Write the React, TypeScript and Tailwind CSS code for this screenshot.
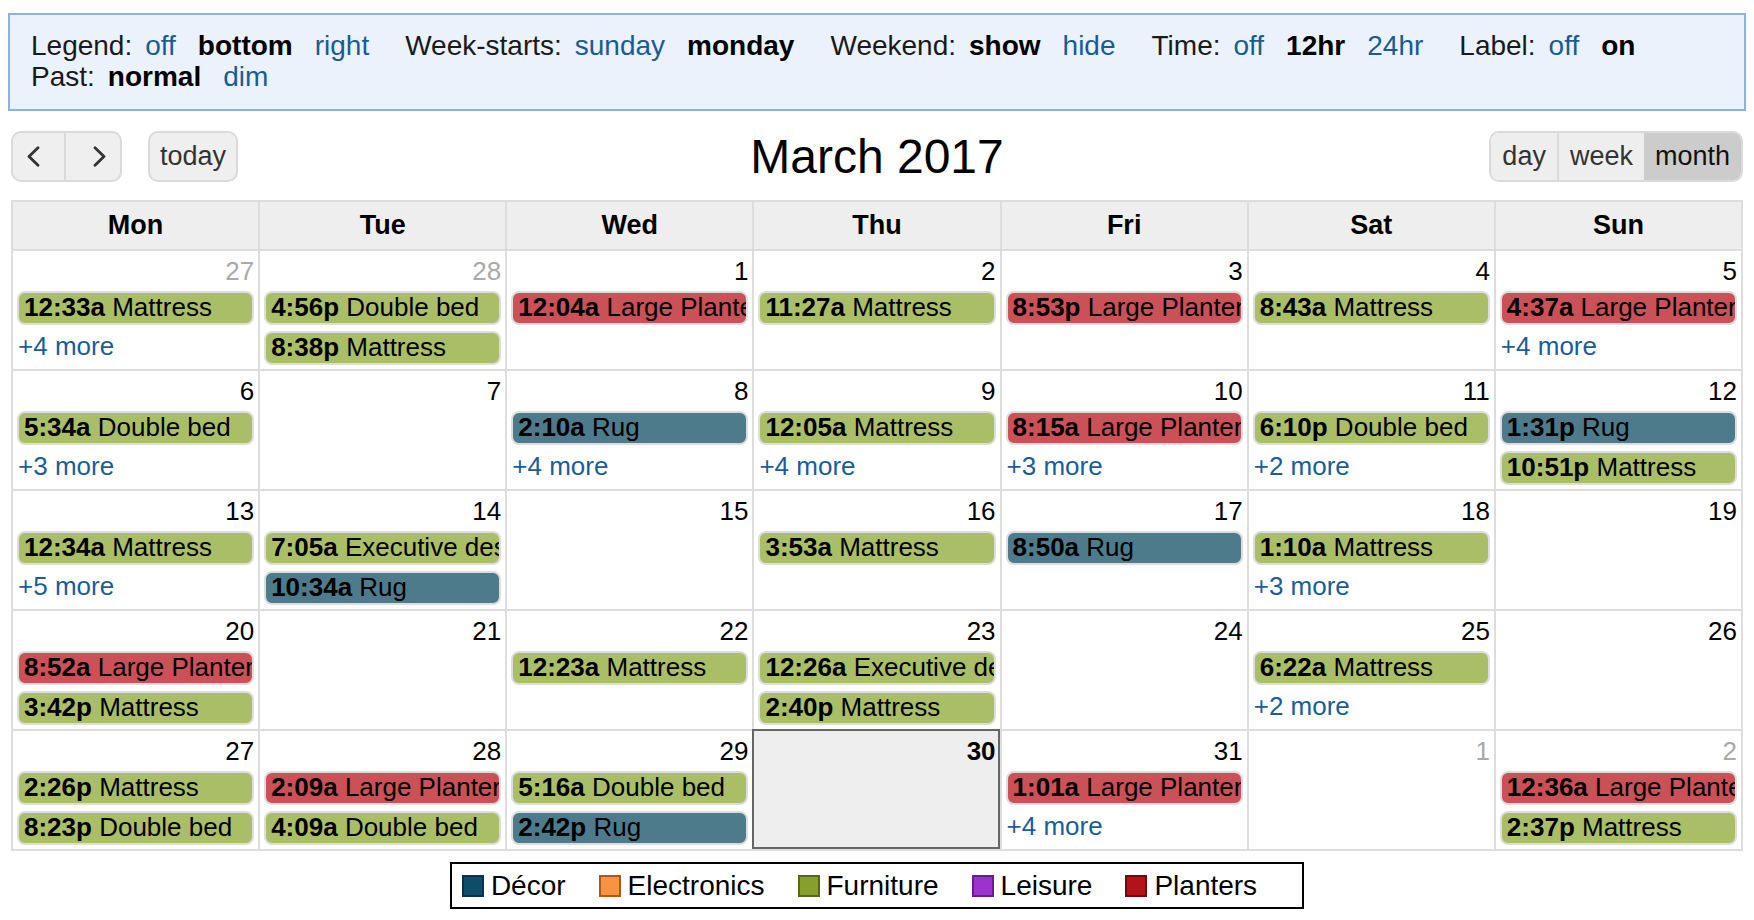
import React from "react";

type Cat = "F" | "P" | "D";
type Ev = [string, string, Cat];
type Day = { n: number; o?: boolean; t?: boolean; e: Ev[]; m?: number };

const evBg: Record<Cat, string> = {
  F: "bg-[#aabe68]",
  P: "bg-[#cb5158]",
  D: "bg-[#4d7b8c]",
};

const weeks: Day[][] = [
  [
    { n: 27, o: true, e: [["12:33a", "Mattress", "F"]], m: 4 },
    { n: 28, o: true, e: [["4:56p", "Double bed", "F"], ["8:38p", "Mattress", "F"]] },
    { n: 1, e: [["12:04a", "Large Planter", "P"]] },
    { n: 2, e: [["11:27a", "Mattress", "F"]] },
    { n: 3, e: [["8:53p", "Large Planter", "P"]] },
    { n: 4, e: [["8:43a", "Mattress", "F"]] },
    { n: 5, e: [["4:37a", "Large Planter", "P"]], m: 4 },
  ],
  [
    { n: 6, e: [["5:34a", "Double bed", "F"]], m: 3 },
    { n: 7, e: [] },
    { n: 8, e: [["2:10a", "Rug", "D"]], m: 4 },
    { n: 9, e: [["12:05a", "Mattress", "F"]], m: 4 },
    { n: 10, e: [["8:15a", "Large Planter", "P"]], m: 3 },
    { n: 11, e: [["6:10p", "Double bed", "F"]], m: 2 },
    { n: 12, e: [["1:31p", "Rug", "D"], ["10:51p", "Mattress", "F"]] },
  ],
  [
    { n: 13, e: [["12:34a", "Mattress", "F"]], m: 5 },
    { n: 14, e: [["7:05a", "Executive desk", "F"], ["10:34a", "Rug", "D"]] },
    { n: 15, e: [] },
    { n: 16, e: [["3:53a", "Mattress", "F"]] },
    { n: 17, e: [["8:50a", "Rug", "D"]] },
    { n: 18, e: [["1:10a", "Mattress", "F"]], m: 3 },
    { n: 19, e: [] },
  ],
  [
    { n: 20, e: [["8:52a", "Large Planter", "P"], ["3:42p", "Mattress", "F"]] },
    { n: 21, e: [] },
    { n: 22, e: [["12:23a", "Mattress", "F"]] },
    { n: 23, e: [["12:26a", "Executive desk", "F"], ["2:40p", "Mattress", "F"]] },
    { n: 24, e: [] },
    { n: 25, e: [["6:22a", "Mattress", "F"]], m: 2 },
    { n: 26, e: [] },
  ],
  [
    { n: 27, e: [["2:26p", "Mattress", "F"], ["8:23p", "Double bed", "F"]] },
    { n: 28, e: [["2:09a", "Large Planter", "P"], ["4:09a", "Double bed", "F"]] },
    { n: 29, e: [["5:16a", "Double bed", "F"], ["2:42p", "Rug", "D"]] },
    { n: 30, t: true, e: [] },
    { n: 31, e: [["1:01a", "Large Planter", "P"]], m: 4 },
    { n: 1, o: true, e: [] },
    { n: 2, o: true, e: [["12:36a", "Large Planter", "P"], ["2:37p", "Mattress", "F"]] },
  ],
];

const options: { label: string; items: [string, boolean][] }[] = [
  { label: "Legend:", items: [["off", false], ["bottom", true], ["right", false]] },
  { label: "Week-starts:", items: [["sunday", false], ["monday", true]] },
  { label: "Weekend:", items: [["show", true], ["hide", false]] },
  { label: "Time:", items: [["off", false], ["12hr", true], ["24hr", false]] },
  { label: "Label:", items: [["off", false], ["on", true]] },
  { label: "Past:", items: [["normal", true], ["dim", false]] },
];

const legend = [
  { name: "Décor", cls: "bg-[#0c4d68] border-[#07344a]" },
  { name: "Electronics", cls: "bg-[#f79444] border-[#b0561c]" },
  { name: "Furniture", cls: "bg-[#86a12b] border-[#556a18]" },
  { name: "Leisure", cls: "bg-[#9c33cf] border-[#6a1a94]" },
  { name: "Planters", cls: "bg-[#b5111a] border-[#6e0a0f]" },
];

const dayNames = ["Mon", "Tue", "Wed", "Thu", "Fri", "Sat", "Sun"];

function Chevron({ dir }: { dir: "left" | "right" }) {
  return (
    <svg width="15" height="21" viewBox="0 0 15 21" fill="none">
      <polyline
        points={dir === "left" ? "12,1.8 3,10.5 12,19.2" : "3,1.8 12,10.5 3,19.2"}
        stroke="#333"
        strokeWidth="2.8"
        strokeLinecap="round"
        strokeLinejoin="round"
      />
    </svg>
  );
}

function Cell({ d }: { d: Day }) {
  return (
    <div className={`relative h-[120px] border-r-2 border-b-2 border-[#dddddd] px-[4px] pt-[5px] ${d.t ? "bg-[#eeeeee]" : ""}`}>
      {d.t && <div className="absolute -left-[2px] -top-[2px] right-0 bottom-0 border-2 border-[#666666] pointer-events-none" />}
      <div className={`text-right text-[26px] leading-[31px] ${d.o ? "text-[#aaaaaa]" : "text-black"} ${d.t ? "font-bold" : ""}`}>
        {d.n}
      </div>
      <div className="mt-[4px] flex flex-col gap-[6px]">
        {d.e.map((ev, i) => (
          <div
            key={i}
            className={`h-[34px] rounded-[8px] border-2 border-[#dddddd] ${evBg[ev[2]]} px-[5px] text-[26px] leading-[28px] text-black whitespace-nowrap overflow-hidden`}
          >
            <span className="font-bold">{ev[0]}</span> {ev[1]}
          </div>
        ))}
        {d.m ? <div className="pl-[1px] text-[26px] leading-[31px] text-[#1c5d96]">+{d.m} more</div> : null}
      </div>
    </div>
  );
}

export default function App() {
  return (
    <div className="min-h-screen bg-white px-[8px] pt-[13px] text-black" style={{ fontFamily: '"Liberation Sans", Arial, Helvetica, sans-serif' }}>
      {/* options */}
      <div className="border-2 border-[#8eb1e2] bg-[#ebf2fb] pl-[21px] pr-[20px] pt-[15px] pb-[17px] text-[28px] leading-[31px] text-[#1a1a1a]">
        <div className="flex flex-wrap gap-x-[36px]">
          {options.map((g) => (
            <div key={g.label} className="flex">
              <span className="mr-[13px]">{g.label}</span>
              <span className="flex gap-[22px]">
                {g.items.map(([t, on]) => (
                  <span key={t} className={on ? "font-bold text-black" : "text-[#1b5b92]"}>
                    {t}
                  </span>
                ))}
              </span>
            </div>
          ))}
        </div>
      </div>

      {/* toolbar */}
      <div className="mx-[3px] mt-[20px] grid h-[51px] grid-cols-3 items-center">
        <div className="flex items-center gap-[26px]">
          <div className="flex h-[51px] rounded-[10px] border-2 border-[#dadada] bg-[#efefef]">
            <div className="flex w-[53px] items-center justify-center border-r-2 border-[#dadada] pr-[10px]">
              <Chevron dir="left" />
            </div>
            <div className="flex w-[54px] items-center justify-center pl-[12px]">
              <Chevron dir="right" />
            </div>
          </div>
          <div className="flex h-[51px] items-center rounded-[10px] border-2 border-[#dadada] bg-[#efefef] px-[10px] text-[27px] text-[#333333]">
            today
          </div>
        </div>
        <div className="text-center text-[48px] leading-none">March 2017</div>
        <div className="flex justify-end">
          <div className="flex h-[51px] overflow-hidden rounded-[10px] border-2 border-[#dadada] text-[27px]">
            <div className="flex items-center border-r-2 border-[#dadada] bg-[#eeeeee] px-[11px] text-[#333333]">day</div>
            <div className="flex items-center bg-[#eeeeee] px-[11px] text-[#333333]">week</div>
            <div className="flex items-center bg-[#cccccc] px-[11px] text-[#111111]">month</div>
          </div>
        </div>
      </div>

      {/* calendar */}
      <div className="mx-[3px] mt-[18px] border-l-2 border-t-2 border-[#dddddd]">
        <div className="grid grid-cols-7 bg-[#eeeeee]">
          {dayNames.map((n) => (
            <div key={n} className="flex h-[49px] items-center justify-center border-r-2 border-b-2 border-[#dddddd] text-[27px] font-bold">
              {n}
            </div>
          ))}
        </div>
        {weeks.map((w, i) => (
          <div key={i} className="grid grid-cols-7">
            {w.map((d, j) => (
              <Cell key={j} d={d} />
            ))}
          </div>
        ))}
      </div>

      {/* legend */}
      <div className="mt-[11px] flex justify-center">
        <div className="flex h-[47px] items-center border-2 border-black pl-[10px] pr-[12px] text-[28px]">
          {legend.map((l) => (
            <div key={l.name} className="mr-[33px] flex items-center">
              <span className={`h-[22px] w-[22px] border-2 ${l.cls}`} />
              <span className="ml-[7px]">{l.name}</span>
            </div>
          ))}
        </div>
      </div>
    </div>
  );
}
